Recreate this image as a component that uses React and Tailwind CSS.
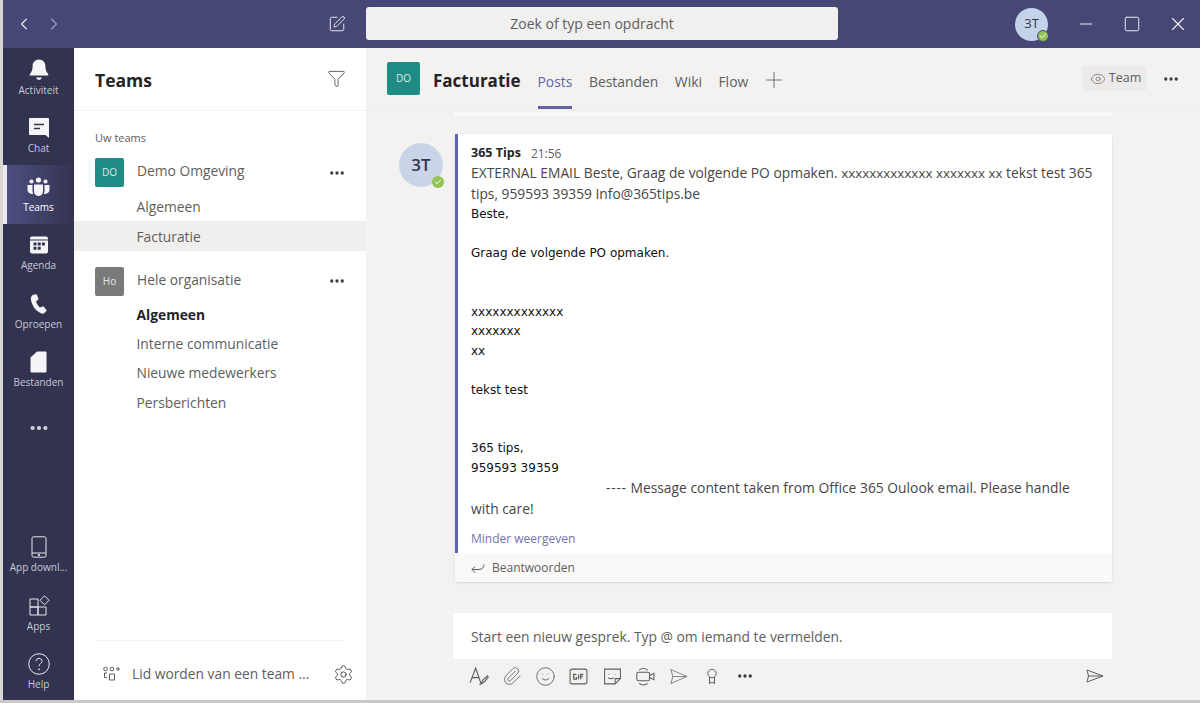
import React from "react";
import { ChevronLeft, ChevronRight, SquarePen, Funnel, Ellipsis, Plus, Eye, Minus, Square, X, Settings, Paperclip, Smile, Check } from "lucide-react";

const railTop = [
  ["Activiteit", <svg key="a" width="22" height="24" viewBox="0 0 22 24" fill="#f5f5f8"><path d="M11 1.500c-4 0-6.400 3-6.400 6.600 0 4-.9 6-2.800 8v1.400h18.400v-1.400c-1.900-2-2.800-4-2.800-8 0-3.600-2.400-6.600-6.400-6.600z"/><path d="M8.200 19.400h5.600c-.3 1.500-1.400 2.400-2.800 2.400s-2.500-.9-2.800-2.400z"/></svg>],
  ["Chat", <svg key="b" width="22" height="22" viewBox="0 0 22 22"><path fill="#f5f5f8" d="M2 1h18a1 1 0 0 1 1 1v15.500l.1 3.500-3.600-3H2a1 1 0 0 1-1-1V2a1 1 0 0 1 1-1z"/><path stroke="#33344f" strokeWidth="1.500" d="M6 7.500h10M6 11.500h6"/></svg>],
  ["Teams", <svg key="c" width="23" height="20" viewBox="0 0 23 20" fill="#f5f5f8"><circle cx="11.500" cy="3" r="2.600"/><circle cx="4.500" cy="4.500" r="2.100"/><circle cx="18.500" cy="4.500" r="2.100"/><path d="M7 7.500h9v7a4.500 4.500 0 0 1-9 0z"/><path d="M.5 8h5v6.500l.6 2.500C3 17.200.5 15.500.5 12.500zM22.500 8h-5v6.500l-.6 2.500c3.100.2 5.600-1.500 5.600-4.500z"/></svg>],
  ["Agenda", <svg key="d" width="20" height="20" viewBox="0 0 20 20"><path fill="#f5f5f8" d="M2.500 1.500h15A2 2 0 0 1 19 3.500v13a2 2 0 0 1-2 2H3a2 2 0 0 1-2-2v-13a2 2 0 0 1 1.500-2z"/><path fill="#33344f" d="M1 4.500h18v1H1zM4.500 7.500h3v3h-3zM8.700 7.500h3v3h-3zM12.900 7.500h3v3h-3zM4.500 11.700h3v3h-3zM8.700 11.700h3v3h-3z"/></svg>],
  ["Oproepen", <svg key="e" width="18" height="20" viewBox="0 0 18 20" fill="#f5f5f8"><path d="M3.300.8 5.800.2c.5-.1.9.1 1.100.6l1.500 3.700c.2.500 0 .9-.3 1.300L6.300 7.200c-.2.300-.2.600-.1.900.7 2 1.800 3.700 3.400 5.100.3.200.6.300.9.100l2-.8c.5-.2 1-.1 1.300.3l2.500 3c.3.400.3.900 0 1.300l-1.600 1.700c-1 1-2.500 1.200-3.800.5C5.200 16.500 1.700 11.200.9 5.300.7 3.300 1.600 1.500 3.300.8z"/></svg>],
  ["Bestanden", <svg key="f" width="17" height="22" viewBox="0 0 17 22" fill="#f5f5f8"><path d="M7 .5h8.500a1 1 0 0 1 1 1v19a1 1 0 0 1-1 1h-14a1 1 0 0 1-1-1V6.500z"/></svg>],
];

const railBottom = [
  ["App downl...", <svg key="g" width="16" height="22" viewBox="0 0 16 22" fill="none" stroke="#e8e8ee" strokeWidth="1"><rect x="1" y=".8" width="14" height="20.400" rx="1.500"/><path d="M1 17h14"/><circle cx="8" cy="19" r=".7" fill="#e8e8ee"/></svg>],
  ["Apps", <svg key="h" width="22" height="22" viewBox="0 0 22 22" fill="none" stroke="#e8e8ee" strokeWidth="1"><path d="M2 4h8v8H2zM2 12h8v8H2zM10 12h8v8h-8z"/><path d="M16.500 .8 21 5.300 16.500 9.800 12 5.300z"/></svg>],
  ["Help", <svg key="i" width="22" height="22" viewBox="0 0 22 22" fill="none" stroke="#e8e8ee" strokeWidth="1"><circle cx="11" cy="11" r="10.300"/><path d="M8 8.300c0-1.700 1.300-3 3-3s3 1.200 3 2.900c0 2.400-3 2.400-3 5"/><circle cx="11" cy="16.300" r=".5" fill="#e8e8ee"/></svg>],
];

function RailItem({ label, icon, active, low }) {
  return (
    <div className={`relative h-[58.5px] flex flex-col items-center justify-end gap-[1px] ${low ? "pb-[9px]" : "pb-[10px]"} ${active ? "bg-gradient-to-r from-[#4f5184] to-[#33344f]" : ""}`}>
      {active && <div className="absolute left-0 top-0 bottom-0 w-[4px] bg-[#e9e9f3]" />}
      <div className="h-[24px] flex items-center justify-center">{icon}</div>
      <span className={`text-[10px] leading-[14px] ${active ? "text-white" : "text-[#c8c8d8]"}`}>{label}</span>
    </div>
  );
}

function Tile({ text, color, size = "w-[29px] h-[29px]" }) {
  return <div className={`${size} ${color} rounded-[2px] flex items-center justify-center text-[10px] text-[#e6e6e6]`}>{text}</div>;
}

function Channel({ children, active, bold }) {
  return (
    <div className={`h-[29.3px] pl-[62.5px] pt-[2px] flex items-center text-[13.800px] ${bold ? "font-bold text-[#252423]" : "text-[#605e5c]"} ${active ? "bg-[#f0efed]" : ""}`}>
      {children}
    </div>
  );
}

function TeamRow({ tile, color, name }) {
  return (
    <div className="h-[29px] pl-[21px] pr-[20px] flex items-center">
      <Tile text={tile} color={color} />
      <span className="ml-[13px] pb-[2px] flex-1 text-[13.800px] text-[#605e5c]">{name}</span>
      <Ellipsis size={18} strokeWidth={2.400} className="text-[#3b3a39]" />
    </div>
  );
}

function Presence({ className }) {
  return (
    <div className={`absolute w-[12px] h-[12px] rounded-full bg-[#92c353] flex items-center justify-center ${className}`}>
      <Check size={8} strokeWidth={3} className="text-white" />
    </div>
  );
}

function Tool({ children }) {
  return <div className="w-[18px] h-[22px] flex items-center justify-center">{children}</div>;
}

export default function App() {
  return (
    <div className="w-[1200px] h-[703px] overflow-hidden flex flex-col bg-[#c9c7c7] text-[#252423]" style={{ fontFamily: '"Open Sans", "Noto Sans", sans-serif' }}>
      <div className="h-[700px] flex">
        <div className="w-[3px] bg-[#d8d6d2]" />
        <div className="flex-1 flex flex-col min-w-0">
          {/* Title bar */}
          <div className="h-[48px] bg-[#464775] flex items-center">
            <ChevronLeft size={20} strokeWidth={1.300} className="ml-[11px] text-[#e8e8f2]" />
            <ChevronRight size={20} strokeWidth={1.300} className="ml-[10px] text-[#9a9bc2]" />
            <SquarePen size={18} strokeWidth={1.300} className="ml-[264px] text-[#e8e8f2]" />
            <div className="ml-[20px] mb-[1px] w-[472px] h-[33px] bg-[#f0f0ef] rounded-[3px] pr-[20px] pb-[1px] flex items-center justify-center text-[14px] text-[#605e5c]">
              Zoek of typ een opdracht
            </div>
            <div className="relative ml-[177px] w-[33px] h-[33px] rounded-full bg-[#c5d3ea] flex items-center justify-center text-[13px] text-[#33344f]">
              3T
              <Presence className="right-[-1px] bottom-[-1px] border border-[#464775]" />
            </div>
            <Minus size={20} strokeWidth={1.300} className="ml-[28px] text-[#f0f0f5]" />
            <Square size={18} strokeWidth={1.300} className="ml-[27px] text-[#f0f0f5]" />
            <X size={22} strokeWidth={1.200} className="ml-[26px] text-[#f0f0f5]" />
          </div>

          <div className="flex-1 flex min-h-0">
            {/* Rail */}
            <div className="w-[71px] bg-[#32334e] flex flex-col">
              {railTop.map(([l, i]) => <RailItem key={l} label={l} icon={i} active={l === "Teams"} />)}
              <div className="h-[41px] flex items-end justify-center pb-[1px]">
                <Ellipsis size={22} strokeWidth={2.600} className="text-[#d4d4e2]" />
              </div>
              <div className="flex-1" />
              {railBottom.map(([l, i]) => <RailItem key={l} label={l} icon={i} low />)}
            </div>

            {/* Sidebar */}
            <div className="w-[292px] bg-white flex flex-col">
              <div className="h-[63px] pl-[21px] pr-[20px] flex items-center justify-between border-b border-[#f3f2f1]">
                <span className="pt-[2px] text-[17.500px] font-bold text-[#252423]">Teams</span>
                <Funnel size={19} strokeWidth={1} className="mb-[2px] text-[#3b3a39]" />
              </div>
              <div className="pl-[21px] mt-[20px] text-[11px] leading-[14px] text-[#605e5c]">Uw teams</div>
              <div className="mt-[13px]"><TeamRow tile="DO" color="bg-[#1c8c84]" name="Demo Omgeving" /></div>
              <div className="mt-[5px]">
                <Channel>Algemeen</Channel>
                <Channel active>Facturatie</Channel>
              </div>
              <div className="mt-[16px]"><TeamRow tile="Ho" color="bg-[#7a7a7a]" name="Hele organisatie" /></div>
              <div className="mt-[4px]">
                <Channel bold>Algemeen</Channel>
                <Channel>Interne communicatie</Channel>
                <Channel>Nieuwe medewerkers</Channel>
                <Channel>Persberichten</Channel>
              </div>
              <div className="flex-1" />
              <div className="mx-[21px] h-[60px] pt-[7px] border-t border-[#f3f2f1] flex items-center">
                <svg width="18" height="16" viewBox="0 0 18 16" fill="none" stroke="#605e5c" strokeWidth="1" className="ml-[8px]">
                  <circle cx="2.500" cy="3" r="1.800" /><circle cx="9" cy="3" r="1.800" />
                  <path d="M4 7H1.500v4.500H4M6.500 8h5v6h-5zM13 3h4M15 1v4" />
                </svg>
                <span className="ml-[11px] flex-1 whitespace-nowrap text-[13.800px] text-[#605e5c]">Lid worden van een team ...</span>
                <Settings size={21} strokeWidth={1} className="mr-[-9px] text-[#3b3a39]" />
              </div>
            </div>

            {/* Main */}
            <div className="flex-1 min-w-0 bg-[#f3f2f1] flex flex-col">
              <div className="h-[62px] pl-[21px] pr-[20px] flex items-center border-b border-[#eeedeb]">
                <Tile text="DO" color="bg-[#1c8c84]" size="w-[33px] h-[33px]" />
                <span className="ml-[13px] pt-[4px] text-[17px] font-bold text-[#252423]">Facturatie</span>
                <div className="ml-[17px] h-full flex items-stretch gap-[16.500px] text-[13.900px] text-[#605e5c]">
                  <div className="relative flex items-center text-[#6264a7] pt-[7px]">Posts<div className="absolute left-0 right-0 bottom-0 h-[3px] bg-[#6264a7]" /></div>
                  <div className="flex items-center pt-[7px]">Bestanden</div>
                  <div className="flex items-center pt-[7px]">Wiki</div>
                  <div className="flex items-center pt-[7px]">Flow</div>
                  <div className="flex items-center pt-[3px]"><Plus size={26} strokeWidth={0.800} className="ml-[-4px]" /></div>
                </div>
                <div className="flex-1" />
                <div className="w-[64px] h-[25px] bg-[#edebe9] rounded-[2px] pl-[3px] flex items-center justify-center gap-[3px] text-[12.500px] text-[#605e5c]">
                  <Eye size={16} strokeWidth={1} />Team
                </div>
                <Ellipsis size={18} strokeWidth={2.400} className="ml-[16px] text-[#3b3a39]" />
              </div>

              <div className="flex-1 min-h-0 pl-[33px] pr-[88px] flex flex-col">
                <div className="ml-[55px] h-[4px] mt-[2px] bg-[#f9f8f7]" />
                <div className="mt-[18px] flex">
                  <div className="relative mt-[9px] w-[44px] h-[44px] rounded-full bg-[#c9d4e8] flex items-center justify-center text-[17px] font-semibold text-[#33344f]">
                    3T
                    <Presence className="right-[-1px] bottom-[-1px]" />
                  </div>
                  <div className="ml-[12px] flex-1 min-w-0 rounded-[3px] shadow-sm">
                    <div className="bg-white border-l-[3px] border-[#6264a7] pl-[13px] h-[419px] pt-[10px]">
                      <div className="flex items-center h-[19px]">
                        <span className="text-[12.500px] font-bold text-[#252423]">365 Tips</span>
                        <span className="ml-[10px] text-[12px] text-[#605e5c]">21:56</span>
                      </div>
                      <div className="text-[13.800px] leading-[20.500px] text-[#484644] whitespace-nowrap">
                        EXTERNAL EMAIL Beste, Graag de volgende PO opmaken. <span className="text-[13.400px]">xxxxxxxxxxxxx xxxxxxx xx</span> tekst test 365<br />tips, 959593 39359 Info@365tips.be
                      </div>
                      <div className="mt-[1px] text-[12px] leading-[19.500px] text-[#111111] whitespace-pre" style={{ fontFamily: '"DejaVu Sans", sans-serif' }}>
                        {"Beste,\n\nGraag de volgende PO opmaken.\n\n\nxxxxxxxxxxxxx\nxxxxxxx\nxx\n\ntekst test\n\n\n365 tips,\n959593 39359"}
                      </div>
                      <div className="mt-[-1px] text-[13.850px] leading-[21px] text-[#484644] whitespace-nowrap">
                        <span className="inline-block w-[135px]" /><span className="tracking-[0.75px]">----</span> Message content taken from Office 365 Oulook email. Please handle<br />with care!
                      </div>
                      <div className="mt-[12px] text-[12px] leading-[16px] text-[#7173ad]">Minder weergeven</div>
                    </div>
                    <div className="h-[29px] bg-[#faf9f8] pl-[16px] flex items-center text-[12px] text-[#605e5c]">
                      <svg width="14" height="10" viewBox="0 0 14 10" fill="none" stroke="#605e5c" strokeWidth="1"><path d="M13 1.500c0 3-2 5-5 5H1M4 3.500 1 6.500 4 9.500" /></svg>
                      <span className="ml-[7px]">Beantwoorden</span>
                    </div>
                  </div>
                </div>

                <div className="mt-[31px] ml-[54px] h-[46px] bg-white pl-[18px] pt-[3px] flex items-center text-[13.850px] text-[#605e5c]">
                  Start een nieuw gesprek. Typ @ om iemand te vermelden.
                </div>
                <div className="ml-[54px] h-[34px] pl-[17px] pr-[8px] flex items-center gap-[15.250px] text-[#605e5c]">
                  <Tool><svg className="shrink-0" width="20" height="20" viewBox="0 0 18 18" fill="none" stroke="currentColor" strokeWidth="1"><path d="M1 15 6 2l4.500 13M2.800 10.500h6" /><path d="M10 16.500c1-2 3-5 6.500-7.500l.8 1c-2 3-4 5-6 6z" /></svg></Tool>
                  <Tool><Paperclip size={20} strokeWidth={1} className="shrink-0" /></Tool>
                  <Tool><Smile size={21} strokeWidth={1} className="shrink-0" /></Tool>
                  <Tool><svg className="shrink-0" width="19" height="19" viewBox="0 0 18 18" fill="none" stroke="currentColor" strokeWidth="1"><rect x="1" y="2" width="16" height="14" rx="2" /><path strokeWidth="1.200" d="M7 7H4.500v4.500H7V9.500M9 7v4.500M11 11.500V7h2.500M11 9h2" /></svg></Tool>
                  <Tool><svg className="shrink-0" width="19" height="19" viewBox="0 0 18 18" fill="none" stroke="currentColor" strokeWidth="1"><path d="M1.500 2h15v9l-5 5h-10z" /><path d="M11.500 16v-5h5M5.500 7v.5M11.500 7v.5M5 10c1.500 1.500 3.500 1.500 5 0" /></svg></Tool>
                  <Tool><svg className="shrink-0" width="19" height="19" viewBox="0 0 18 18" fill="none" stroke="currentColor" strokeWidth="1"><rect x=".8" y="5" width="12" height="8" rx="1.500" /><path d="m13 8 4-2v6l-4-2M3 3c2-2 6-2 8 0M3 15.500c2 2 6 2 8 0" /></svg></Tool>
                  <Tool><svg className="shrink-0" width="19" height="19" viewBox="0 0 18 18" fill="none" stroke="#8a8886" strokeWidth="1"><path d="M2 2.500 17 9 2 15.500l1.500-6.500zM3.500 9H17" /></svg></Tool>
                  <Tool><svg className="shrink-0" width="18" height="18" viewBox="0 0 18 18" fill="none" stroke="currentColor" strokeWidth="1"><circle cx="9" cy="6.500" r="4.200" /><path d="M6.500 10v6.500L9 15l2.500 1.500V10" /></svg></Tool>
                  <Tool><Ellipsis size={18} strokeWidth={2.400} className="shrink-0 text-[#3b3a39]" /></Tool>
                  <div className="flex-1" />
                  <svg width="18" height="14" viewBox="0 0 18 14" fill="none" stroke="currentColor" strokeWidth="1"><path d="M1 1 17 7 1 13l1.500-6zM2.500 7H17" /></svg>
                </div>
              </div>
            </div>
          </div>
        </div>
      </div>
    </div>
  );
}
